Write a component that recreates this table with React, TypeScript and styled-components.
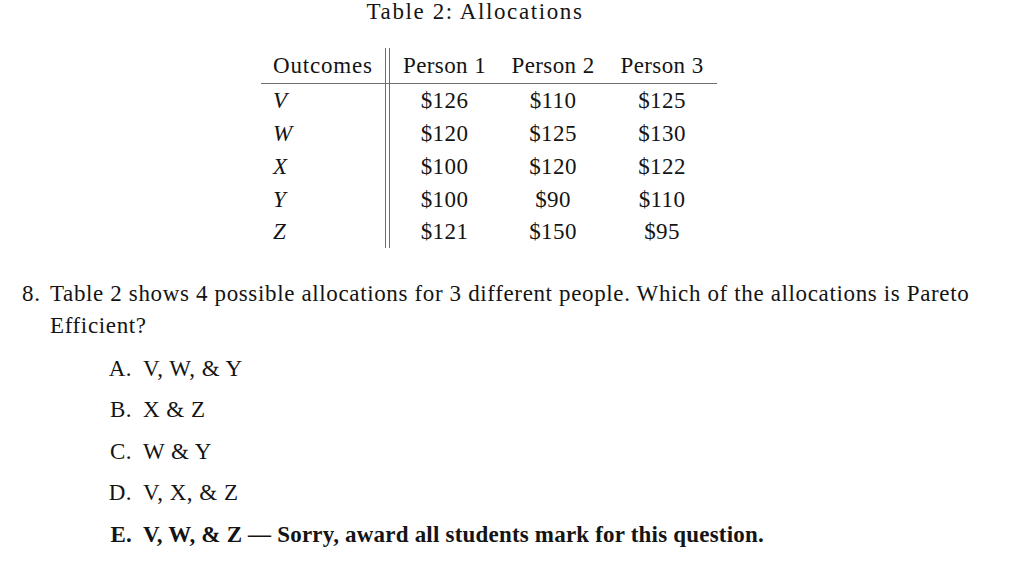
import React from 'react';
import styled, { createGlobalStyle } from 'styled-components';

const Global = createGlobalStyle`
  html, body { margin: 0; padding: 0; background: #ffffff; }
  body {
    font-family: "Liberation Serif", "Times New Roman", serif;
    color: #141414;
    -webkit-font-smoothing: antialiased;
  }
`;

const Page = styled.div`
  width: 1024px;
  height: 587px;
  box-sizing: border-box;
  padding-left: 22px;
  overflow: hidden;
`;

const Caption = styled.div`
  width: 906px;
  text-align: center;
  font-size: 23px;
  letter-spacing: 1.6px;
  line-height: 24px;
`;

const Table = styled.div`
  margin: 24px 0 0 239px;
  display: grid;
  grid-template-columns: 124px 5px 109px 108px 110px;
  grid-template-rows: 35px 1px 33px 33px 33px 33px 32px;
  width: 456px;
  font-size: 23px;
`;

const Cell = styled.div<{ $align?: 'left' | 'center'; $italic?: boolean }>`
  display: flex;
  align-items: center;
  justify-content: ${(p) => (p.$align === 'left' ? 'flex-start' : 'center')};
  padding-left: ${(p) => (p.$align === 'left' ? '12px' : '0')};
  font-style: ${(p) => (p.$italic ? 'italic' : 'normal')};
  letter-spacing: ${(p) => (p.$align === 'left' ? '0.8px' : '0.4px')};
  white-space: nowrap;
`;

const Rule = styled.div`
  grid-column: 1 / -1;
  grid-row: 2;
  background: #6e6e6e;
`;

const Divider = styled.div`
  grid-column: 2;
  grid-row: 1 / -1;
  box-sizing: border-box;
  border-left: 1px solid #6e6e6e;
  border-right: 1px solid #6e6e6e;
  z-index: 1;
`;

const Question = styled.div`
  margin-top: 30px;
  display: flex;
  font-size: 23px;
  letter-spacing: 0.64px;
  line-height: 32px;
`;

const QNum = styled.div`
  width: 28px;
  flex: none;
`;

const QText = styled.div`
  width: 930px;
`;

const Options = styled.div`
  margin-top: 6px;
  display: flex;
  flex-direction: column;
  font-size: 23px;
`;

const Option = styled.div<{ $bold?: boolean }>`
  display: flex;
  height: 41.5px;
  align-items: center;
  font-weight: ${(p) => (p.$bold ? 700 : 400)};
  letter-spacing: ${(p) => (p.$bold ? '0.2px' : '0.5px')};
`;

const OptLabel = styled.span`
  width: 110px;
  text-align: right;
  flex: none;
`;

const OptText = styled.span`
  margin-left: 11px;
  white-space: nowrap;
`;

const header = ['Person 1', 'Person 2', 'Person 3'];
const rows: [string, string, string, string][] = [
  ['V', '$126', '$110', '$125'],
  ['W', '$120', '$125', '$130'],
  ['X', '$100', '$120', '$122'],
  ['Y', '$100', '$90', '$110'],
  ['Z', '$121', '$150', '$95'],
];

const options: { l: string; t: string; bold?: boolean }[] = [
  { l: 'A.', t: 'V, W, & Y' },
  { l: 'B.', t: 'X & Z' },
  { l: 'C.', t: 'W & Y' },
  { l: 'D.', t: 'V, X, & Z' },
  { l: 'E.', t: 'V, W, & Z \u2014 Sorry, award all students mark for this question.', bold: true },
];

export default function App() {
  return (
    <Page>
      <Global />
      <Caption>Table 2: Allocations</Caption>
      <Table>
        <Cell $align="left" style={{ gridColumn: 1, gridRow: 1 }}>Outcomes</Cell>
        {header.map((h, i) => (
          <Cell key={h} style={{ gridColumn: i + 3, gridRow: 1 }}>{h}</Cell>
        ))}
        <Rule />
        <Divider />
        {rows.map((r, ri) => (
          <React.Fragment key={r[0]}>
            <Cell $align="left" $italic style={{ gridColumn: 1, gridRow: ri + 3 }}>{r[0]}</Cell>
            {r.slice(1).map((v, ci) => (
              <Cell key={ci} style={{ gridColumn: ci + 3, gridRow: ri + 3 }}>{v}</Cell>
            ))}
          </React.Fragment>
        ))}
      </Table>
      <Question>
        <QNum>8.</QNum>
        <QText>
          Table 2 shows 4 possible allocations for 3 different people. Which of the allocations is Pareto Efficient?
        </QText>
      </Question>
      <Options>
        {options.map((o) => (
          <Option key={o.l} $bold={o.bold}>
            <OptLabel>{o.l}</OptLabel>
            <OptText>{o.t}</OptText>
          </Option>
        ))}
      </Options>
    </Page>
  );
}
